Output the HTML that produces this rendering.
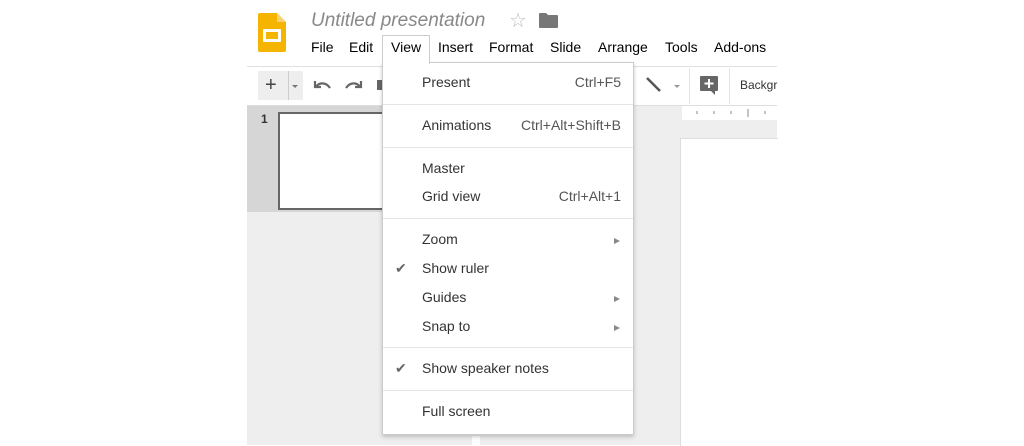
<!DOCTYPE html>
<html><head><style>
body{margin:0;width:1024px;height:445px;background:#fff;position:relative;overflow:hidden;font-family:"Liberation Sans",Arial,sans-serif;color:#222}
.a{position:absolute}
.mb{position:absolute;top:39px;font-size:14px;color:#000}
.it{position:absolute;left:39px;font-size:14px;color:#333;line-height:16px}
.sc{position:absolute;right:12px;font-size:14px;color:#555;line-height:16px}
.sep{position:absolute;left:0;right:0;height:1px;background:#e5e5e5}
.ar{position:absolute;right:13px;width:0;height:0;border-left:6px solid #888;border-top:3.5px solid transparent;border-bottom:3.5px solid transparent}
.ck{position:absolute;left:12px;font-size:14px;color:#666}
</style></head><body>
<svg class="a" style="left:258px;top:13px" width="28" height="39" viewBox="0 0 28 39">
<path d="M2 0H19L28 9V37a2 2 0 0 1-2 2H2a2 2 0 0 1-2-2V2a2 2 0 0 1 2-2z" fill="#f4b400"/>
<path d="M19 0V9H28z" fill="#f9d26f"/>
<rect x="5" y="16" width="18" height="13" rx="1" fill="#fff"/>
<rect x="8" y="19" width="12" height="7" fill="#f4b400"/>
</svg>
<div class="a" style="left:311px;top:10px;font-size:19px;font-style:italic;color:#888">Untitled presentation</div>
<div class="a" style="left:509px;top:8px;font-size:20px;color:#bbb">☆</div>
<svg class="a" style="left:539px;top:13px" width="19" height="15" viewBox="0 0 19 15"><path d="M0 1a1 1 0 0 1 1-1h6l2 2h9a1 1 0 0 1 1 1v11a1 1 0 0 1-1 1H1a1 1 0 0 1-1-1z" fill="#777"/></svg>
<div class="mb" style="left:311px">File</div>
<div class="mb" style="left:349px">Edit</div>
<div class="a" style="left:382px;top:35px;width:46px;height:28px;border:1px solid #ccc;border-bottom:none;background:#fff;z-index:3"></div>
<div class="mb" style="left:391px;z-index:4">View</div>
<div class="mb" style="left:438px">Insert</div>
<div class="mb" style="left:489px">Format</div>
<div class="mb" style="left:550px">Slide</div>
<div class="mb" style="left:598px">Arrange</div>
<div class="mb" style="left:665px">Tools</div>
<div class="mb" style="left:714px">Add-ons</div>
<div class="a" style="left:247px;top:66px;width:530px;height:1px;background:#e0e0e0"></div>
<div class="a" style="left:258px;top:71px;width:45px;height:29px;background:#eee"></div>
<div class="a" style="left:288px;top:71px;width:1px;height:29px;background:#ccc"></div>
<div class="a" style="left:265px;top:74px;font-size:20px;color:#444">+</div>
<div class="a" style="left:292px;top:85px;border-left:3px solid transparent;border-right:3px solid transparent;border-top:3px solid #777;width:0"></div>
<svg class="a" style="left:313px;top:78px" width="50" height="14" viewBox="0 0 50 14"><path d="M2 3v6h6M3 9c3-5 10-5 14 1" stroke="#666" stroke-width="2.2" fill="none"/><path d="M48 3v6h-6M47 9c-3-5-10-5-14 1" stroke="#666" stroke-width="2.2" fill="none"/></svg>
<div class="a" style="left:377px;top:80px;width:5px;height:10px;background:#666"></div>
<svg class="a" style="left:645px;top:76px" width="18" height="18"><path d="M2 2L15 15" stroke="#555" stroke-width="2.5"/></svg>
<div class="a" style="left:674px;top:85px;border-left:3px solid transparent;border-right:3px solid transparent;border-top:3px solid #999;width:0"></div>
<div class="a" style="left:689px;top:68px;width:1px;height:36px;background:#e5e5e5"></div>
<svg class="a" style="left:700px;top:76px" width="19" height="20" viewBox="0 0 19 20"><path d="M0 1a1 1 0 0 1 1-1h16a1 1 0 0 1 1 1v13a1 1 0 0 1-1 1h-2v4l-4-4H1a1 1 0 0 1-1-1z" fill="#666"/><path d="M9 3v9M4.5 7.5h9" stroke="#fff" stroke-width="2"/></svg>
<div class="a" style="left:729px;top:68px;width:1px;height:36px;background:#e5e5e5"></div>
<div class="a" style="left:740px;top:78px;font-size:12px;color:#333">Backgr</div>
<div class="a" style="left:247px;top:105px;width:530px;height:340px;background:#eee"></div>
<div class="a" style="left:247px;top:105px;width:530px;height:1px;background:#ddd"></div>
<div class="a" style="left:247px;top:106px;width:140px;height:106px;background:#d6d6d6"></div>
<div class="a" style="left:261px;top:112px;font-size:12px;font-weight:bold;color:#333">1</div>
<div class="a" style="left:278px;top:112px;width:110px;height:94px;border:2px solid #666;background:#fff"></div>
<div class="a" style="left:682px;top:106px;width:95px;height:14px;background:#fff"></div>
<svg class="a" style="left:682px;top:106px" width="95" height="14"><g stroke="#888"><path d="M15 5v3M32 5v3M49 5v3M66 3v8M83 5v3"/></g></svg>
<div class="a" style="left:680px;top:138px;width:97px;height:307px;background:#fff;border-left:1px solid #ddd;border-top:1px solid #ddd"></div>
<div class="a" style="left:472px;top:436px;width:8px;height:9px;background:#fff"></div>
<div class="a" style="left:382px;top:62px;width:250px;height:371px;background:#fff;border:1px solid #ccc;box-shadow:0 2px 4px rgba(0,0,0,.2);z-index:2">
<div class="it" style="top:11px">Present</div><div class="sc" style="top:11px">Ctrl+F5</div>
<div class="sep" style="top:41px"></div>
<div class="it" style="top:54px">Animations</div><div class="sc" style="top:54px">Ctrl+Alt+Shift+B</div>
<div class="sep" style="top:84px"></div>
<div class="it" style="top:97px">Master</div>
<div class="it" style="top:125px">Grid view</div><div class="sc" style="top:125px">Ctrl+Alt+1</div>
<div class="sep" style="top:155px"></div>
<div class="it" style="top:168px">Zoom</div><div class="ar" style="top:175px"></div>
<div class="ck" style="top:197px">✔</div><div class="it" style="top:197px">Show ruler</div>
<div class="it" style="top:226px">Guides</div><div class="ar" style="top:233px"></div>
<div class="it" style="top:255px">Snap to</div><div class="ar" style="top:262px"></div>
<div class="sep" style="top:284px"></div>
<div class="ck" style="top:297px">✔</div><div class="it" style="top:297px">Show speaker notes</div>
<div class="sep" style="top:327px"></div>
<div class="it" style="top:340px">Full screen</div>
</div>
</body></html>
